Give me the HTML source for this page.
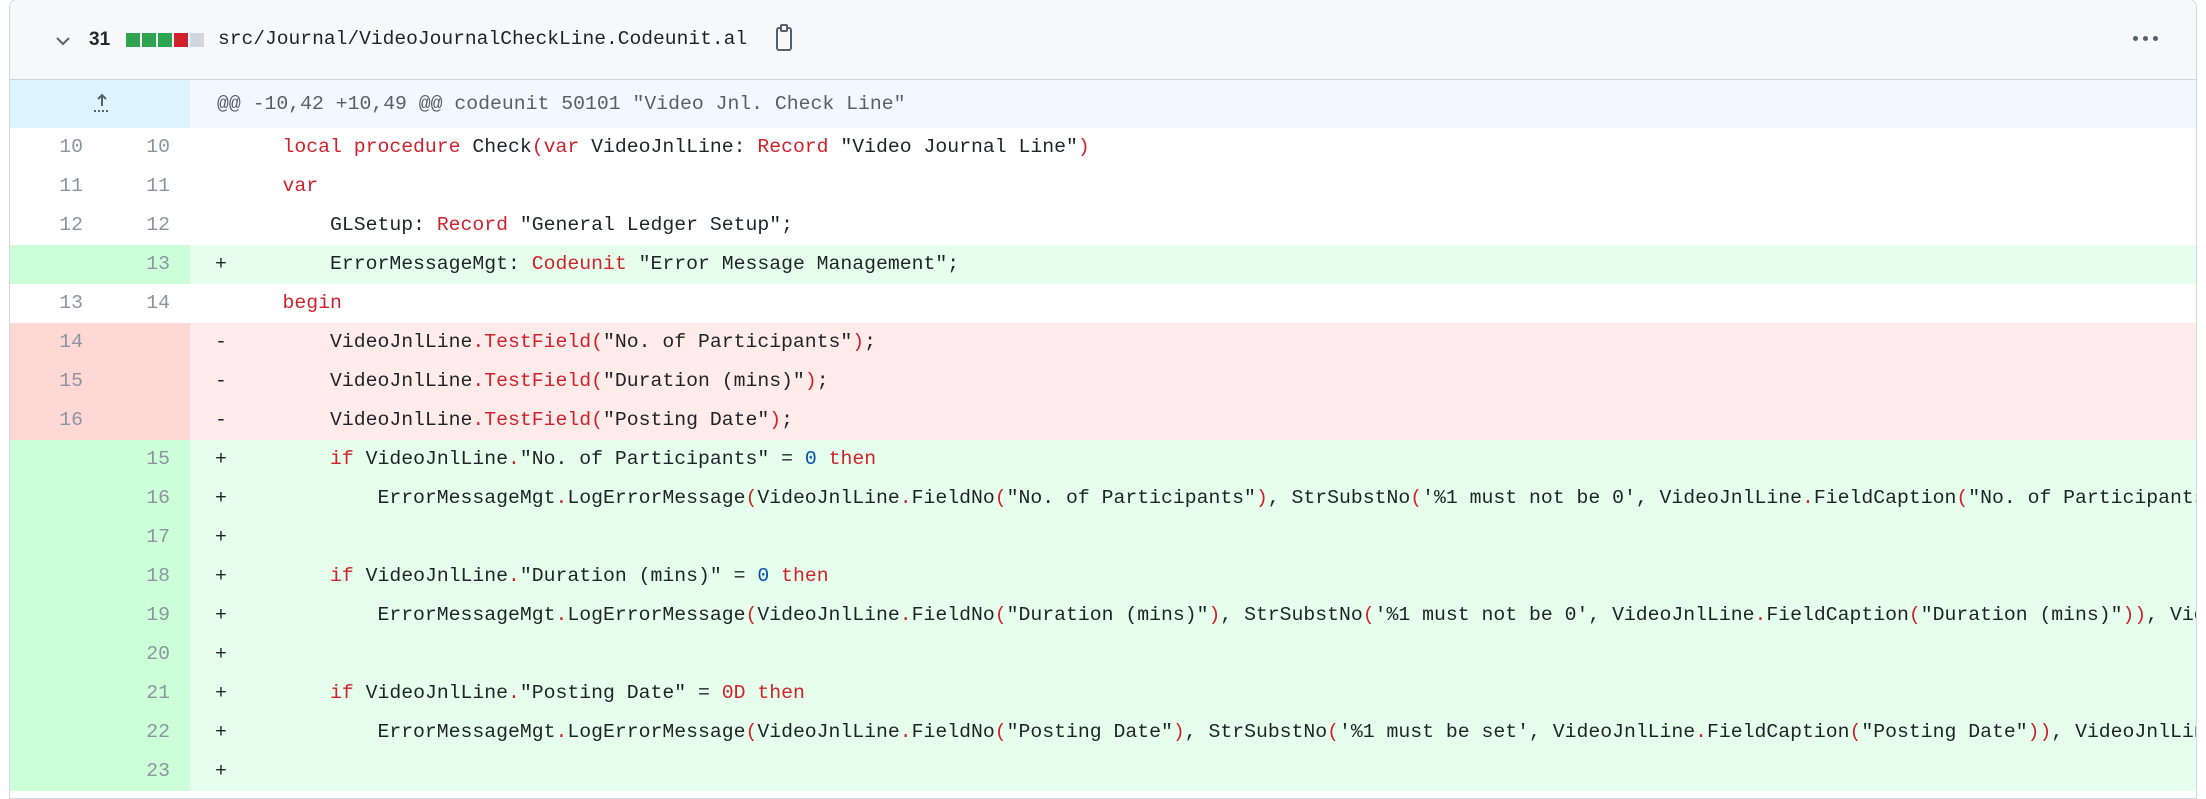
<!DOCTYPE html>
<html><head><meta charset="utf-8"><style>
*{margin:0;padding:0;box-sizing:border-box}
body{width:2206px;height:797px;background:#fff;overflow:hidden;font-family:"Liberation Mono",monospace;font-size:19.8px;color:#1f2328}
.box{position:absolute;left:9px;top:-1px;width:2188px;height:800px;border:1px solid #d0d7de;border-radius:8px 8px 0 0;overflow:hidden}
.hdr{position:absolute;left:0;top:0;width:100%;height:80px;background:#f6f8fa;border-bottom:1px solid #d0d7de}
.row{position:absolute;left:0;width:100%;height:39px;line-height:39px;white-space:pre;overflow:hidden}
.n1,.n2{position:absolute;top:0;width:40px;text-align:right;color:#8c959f}
.n1{left:33px}.n2{left:120px}
.g{position:absolute;left:0;top:0;width:180px;height:100%}
.m{position:absolute;left:205px;top:0}
.c{position:absolute;left:225px;top:0}
.k{color:#cf222e}.b{color:#0550ae}
.add{background:#e6ffec}.add .g{background:#ccffd8}
.del{background:#ffebe9}.del .g{background:#ffd7d5}
.sq{position:absolute;top:33px;width:14px;height:14px}
</style></head><body>
<div class="box">
<div class="hdr">
<svg style="position:absolute;left:45px;top:35px" width="16" height="12" viewBox="0 0 16 12"><path d="M2 3l6 6 6-6" fill="none" stroke="#57606a" stroke-width="2"/></svg>
<div style="position:absolute;left:79px;top:29px;font-family:'Liberation Sans',sans-serif;font-size:19px;font-weight:bold;color:#24292f">31</div>
<div class="sq" style="left:116px;background:#2da44e"></div>
<div class="sq" style="left:132px;background:#2da44e"></div>
<div class="sq" style="left:148px;background:#2da44e"></div>
<div class="sq" style="left:164px;background:#cf222e"></div>
<div class="sq" style="left:180px;background:#d0d7de"></div>
<div style="position:absolute;left:208px;top:28px;font-size:19.6px">src/Journal/VideoJournalCheckLine.Codeunit.al</div>
<svg style="position:absolute;left:765px;top:24px" width="18" height="28" viewBox="0 0 18 28"><rect x="2" y="4" width="14" height="22" rx="2" fill="none" stroke="#57606a" stroke-width="2"/><rect x="6" y="1" width="6" height="6" rx="1" fill="#f6f8fa" stroke="#57606a" stroke-width="2"/></svg>
<div style="position:absolute;left:2123px;top:36px;width:26px;height:6px">
<span style="position:absolute;left:0;width:5px;height:5px;border-radius:50%;background:#57606a"></span><span style="position:absolute;left:10px;width:5px;height:5px;border-radius:50%;background:#57606a"></span><span style="position:absolute;left:20px;width:5px;height:5px;border-radius:50%;background:#57606a"></span></div>
</div>
<div class="row" style="top:80px;height:48px;line-height:48px;background:#f1f8ff">
<div class="g" style="background:#ddf4ff"></div>
<svg style="position:absolute;left:82px;top:12px" width="20" height="22" viewBox="0 0 20 22"><path d="M10 14V3M6 7l4-4 4 4" fill="none" stroke="#57606a" stroke-width="2"/><path d="M2 19h16" stroke="#57606a" stroke-width="2" stroke-dasharray="2 2"/></svg>
<span class="c" style="left:207px;color:#57606a">@@ -10,42 +10,49 @@ codeunit 50101 "Video Jnl. Check Line"</span></div>

<div class="row" style="top:128px"><div class="g"></div><span class="n1">10</span><span class="n2">10</span><span class="c">    <span class="k">local procedure</span> Check<span class="k">(var</span> VideoJnlLine: <span class="k">Record</span> "Video Journal Line"<span class="k">)</span></span></div>
<div class="row" style="top:167px"><div class="g"></div><span class="n1">11</span><span class="n2">11</span><span class="c">    <span class="k">var</span></span></div>
<div class="row" style="top:206px"><div class="g"></div><span class="n1">12</span><span class="n2">12</span><span class="c">        GLSetup: <span class="k">Record</span> "General Ledger Setup";</span></div>
<div class="row add" style="top:245px"><div class="g"></div><span class="n2">13</span><span class="m">+</span><span class="c">        ErrorMessageMgt: <span class="k">Codeunit</span> "Error Message Management";</span></div>
<div class="row" style="top:284px"><div class="g"></div><span class="n1">13</span><span class="n2">14</span><span class="c">    <span class="k">begin</span></span></div>
<div class="row del" style="top:323px"><div class="g"></div><span class="n1">14</span><span class="m">-</span><span class="c">        VideoJnlLine<span class="k">.TestField(</span>"No. of Participants"<span class="k">)</span>;</span></div>
<div class="row del" style="top:362px"><div class="g"></div><span class="n1">15</span><span class="m">-</span><span class="c">        VideoJnlLine<span class="k">.TestField(</span>"Duration (mins)"<span class="k">)</span>;</span></div>
<div class="row del" style="top:401px"><div class="g"></div><span class="n1">16</span><span class="m">-</span><span class="c">        VideoJnlLine<span class="k">.TestField(</span>"Posting Date"<span class="k">)</span>;</span></div>
<div class="row add" style="top:440px"><div class="g"></div><span class="n2">15</span><span class="m">+</span><span class="c">        <span class="k">if</span> VideoJnlLine<span class="k">.</span>"No. of Participants" = <span class="b">0</span> <span class="k">then</span></span></div>
<div class="row add" style="top:479px"><div class="g"></div><span class="n2">16</span><span class="m">+</span><span class="c">            ErrorMessageMgt<span class="k">.</span>LogErrorMessage<span class="k">(</span>VideoJnlLine<span class="k">.</span>FieldNo<span class="k">(</span>"No. of Participants"<span class="k">)</span>, StrSubstNo<span class="k">(</span>'%1 must not be 0', VideoJnlLine<span class="k">.</span>FieldCaption<span class="k">(</span>"No. of Participants"<span class="k">))</span>, VideoJnlLine</span></div>
<div class="row add" style="top:518px"><div class="g"></div><span class="n2">17</span><span class="m">+</span></div>
<div class="row add" style="top:557px"><div class="g"></div><span class="n2">18</span><span class="m">+</span><span class="c">        <span class="k">if</span> VideoJnlLine<span class="k">.</span>"Duration (mins)" = <span class="b">0</span> <span class="k">then</span></span></div>
<div class="row add" style="top:596px"><div class="g"></div><span class="n2">19</span><span class="m">+</span><span class="c">            ErrorMessageMgt<span class="k">.</span>LogErrorMessage<span class="k">(</span>VideoJnlLine<span class="k">.</span>FieldNo<span class="k">(</span>"Duration (mins)"<span class="k">)</span>, StrSubstNo<span class="k">(</span>'%1 must not be 0', VideoJnlLine<span class="k">.</span>FieldCaption<span class="k">(</span>"Duration (mins)"<span class="k">))</span>, VideoJnlLine</span></div>
<div class="row add" style="top:635px"><div class="g"></div><span class="n2">20</span><span class="m">+</span></div>
<div class="row add" style="top:674px"><div class="g"></div><span class="n2">21</span><span class="m">+</span><span class="c">        <span class="k">if</span> VideoJnlLine<span class="k">.</span>"Posting Date" = <span class="k">0D then</span></span></div>
<div class="row add" style="top:713px"><div class="g"></div><span class="n2">22</span><span class="m">+</span><span class="c">            ErrorMessageMgt<span class="k">.</span>LogErrorMessage<span class="k">(</span>VideoJnlLine<span class="k">.</span>FieldNo<span class="k">(</span>"Posting Date"<span class="k">)</span>, StrSubstNo<span class="k">(</span>'%1 must be set', VideoJnlLine<span class="k">.</span>FieldCaption<span class="k">(</span>"Posting Date"<span class="k">))</span>, VideoJnlLine</span></div>
<div class="row add" style="top:752px"><div class="g"></div><span class="n2">23</span><span class="m">+</span></div>
</div>
</body></html>
